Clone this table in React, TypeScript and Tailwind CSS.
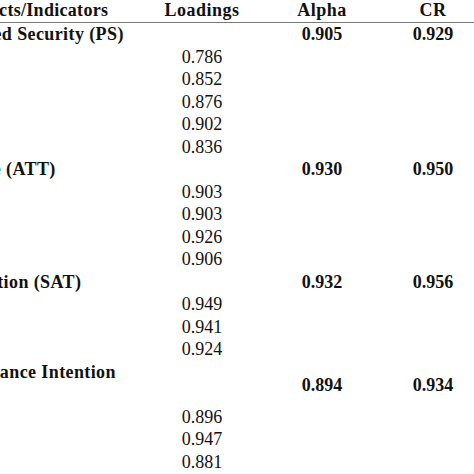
import React from "react";

type Row = {
  label?: string;
  loading?: string;
  alpha?: string;
  cr?: string;
  tall?: boolean;
};

const rows: Row[] = [
  { label: "Perceived Security (PS)", alpha: "0.905", cr: "0.929" },
  { loading: "0.786" },
  { loading: "0.852" },
  { loading: "0.876" },
  { loading: "0.902" },
  { loading: "0.836" },
  { label: "Attitude (ATT)", alpha: "0.930", cr: "0.950" },
  { loading: "0.903" },
  { loading: "0.903" },
  { loading: "0.926" },
  { loading: "0.906" },
  { label: "Satisfaction (SAT)", alpha: "0.932", cr: "0.956" },
  { loading: "0.949" },
  { loading: "0.941" },
  { loading: "0.924" },
  { label: "Continuance Intention", alpha: "0.894", cr: "0.934", tall: true },
  { loading: "0.896" },
  { loading: "0.947" },
  { loading: "0.881" },
];

export default function App() {
  return (
    <div
      className="w-[474px] h-[474px] overflow-hidden bg-white text-[#111]"
      style={{ fontFamily: '"Liberation Serif", "Times New Roman", serif' }}
    >
      <div className="ml-[-66px] w-[550px] text-[18px]">
        <div className="grid grid-cols-[208px_120px_120px_102px] h-[23px] leading-[20px] font-bold border-b border-[#7a7a7a]">
          <div className="whitespace-nowrap tracking-[0.3px]">Constructs/Indicators</div>
          <div className="text-center tracking-[0.5px]">Loadings</div>
          <div className="text-center tracking-[0.5px]">Alpha</div>
          <div className="text-center tracking-[0.5px]">CR</div>
        </div>
        {rows.map((r, i) => (
          <div
            key={i}
            className={
              r.tall
                ? "grid grid-cols-[208px_120px_120px_102px] h-[45px] leading-[22.5px]"
                : "grid grid-cols-[208px_120px_120px_102px] h-[22.5px] leading-[22.5px]"
            }
          >
            <div className="whitespace-nowrap font-bold tracking-[0.4px]">
              {r.label}
              {r.tall ? (
                <>
                  <br />
                  (CI)
                </>
              ) : null}
            </div>
            <div className="text-center">{r.loading}</div>
            <div className={r.tall ? "text-center font-bold pt-[13px]" : "text-center font-bold"}>
              {r.alpha}
            </div>
            <div className={r.tall ? "text-center font-bold pt-[13px]" : "text-center font-bold"}>
              {r.cr}
            </div>
          </div>
        ))}
      </div>
    </div>
  );
}
